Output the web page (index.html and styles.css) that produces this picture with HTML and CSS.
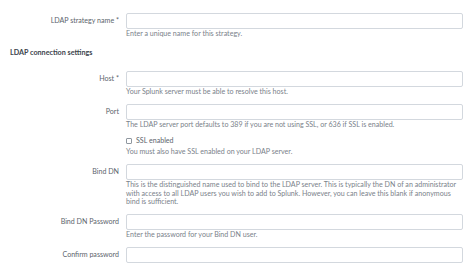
FILE: index.html
```html
<!DOCTYPE html>
<html>
<head>
<meta charset="utf-8">
<link rel="stylesheet" href="styles.css">
</head>
<body>
<form class="form">
  <div class="row">
    <label class="label">LDAP strategy name *</label>
    <div class="field">
      <div class="input"></div>
      <div class="help">Enter a unique name for this strategy.</div>
    </div>
  </div>

  <div class="section">LDAP connection settings</div>

  <div class="row">
    <label class="label">Host *</label>
    <div class="field">
      <div class="input"></div>
      <div class="help">Your Splunk server must be able to resolve this host.</div>
    </div>
  </div>

  <div class="row">
    <label class="label">Port</label>
    <div class="field">
      <div class="input"></div>
      <div class="help">The LDAP server port defaults to 389 if you are not using SSL, or 636 if SSL is enabled.</div>
      <div class="check"><span class="box"></span>SSL enabled</div>
      <div class="help help-tight">You must also have SSL enabled on your LDAP server.</div>
    </div>
  </div>

  <div class="row">
    <label class="label">Bind DN</label>
    <div class="field">
      <div class="input"></div>
      <div class="help">This is the distinguished name used to bind to the LDAP server. This is typically the DN of an administrator with access to all LDAP users you wish to add to Splunk. However, you can leave this blank if anonymous<br>bind is sufficient.</div>
    </div>
  </div>

  <div class="row">
    <label class="label">Bind DN Password</label>
    <div class="field">
      <div class="input"></div>
      <div class="help">Enter the password for your Bind DN user.</div>
    </div>
  </div>

  <div class="row">
    <label class="label">Confirm password</label>
    <div class="field">
      <div class="input"></div>
    </div>
  </div>
</form>
</body>
</html>
```

FILE: styles.css
```css
html, body {
  margin: 0;
  padding: 0;
  background: #ffffff;
}

body {
  font-family: Lato, "Open Sans", "Liberation Sans", sans-serif;
  font-size: 7.1px;
  color: #5a626a;
}

.form {
  padding: 12.5px 11px 0 0;
}

.row {
  display: grid;
  grid-template-columns: 119px 1fr;
  column-gap: 7px;
  margin-bottom: 7px;
}

.label {
  text-align: right;
  line-height: 16px;
  color: #5c646c;
}

.field {
  display: flex;
  flex-direction: column;
}

.input {
  height: 16px;
  box-sizing: border-box;
  border: 1px solid #d3d8de;
  border-radius: 2px;
  background: #fff;
}

.help {
  margin-top: 1.5px;
  line-height: 8.5px;
  color: #7a828a;
}

.help-tight {
  margin-top: 2px;
}

.check {
  display: flex;
  align-items: center;
  gap: 4px;
  margin-top: 6.5px;
  line-height: 10px;
  color: #5c646c;
}

.box {
  width: 6px;
  height: 6px;
  box-sizing: border-box;
  border: 1px solid #8f979f;
  border-radius: 1px;
}

.section {
  padding-left: 10px;
  margin-top: 9.5px;
  margin-bottom: 12.5px;
  line-height: 10px;
  font-size: 7.2px;
  font-weight: bold;
  color: #3c444d;
}
```
